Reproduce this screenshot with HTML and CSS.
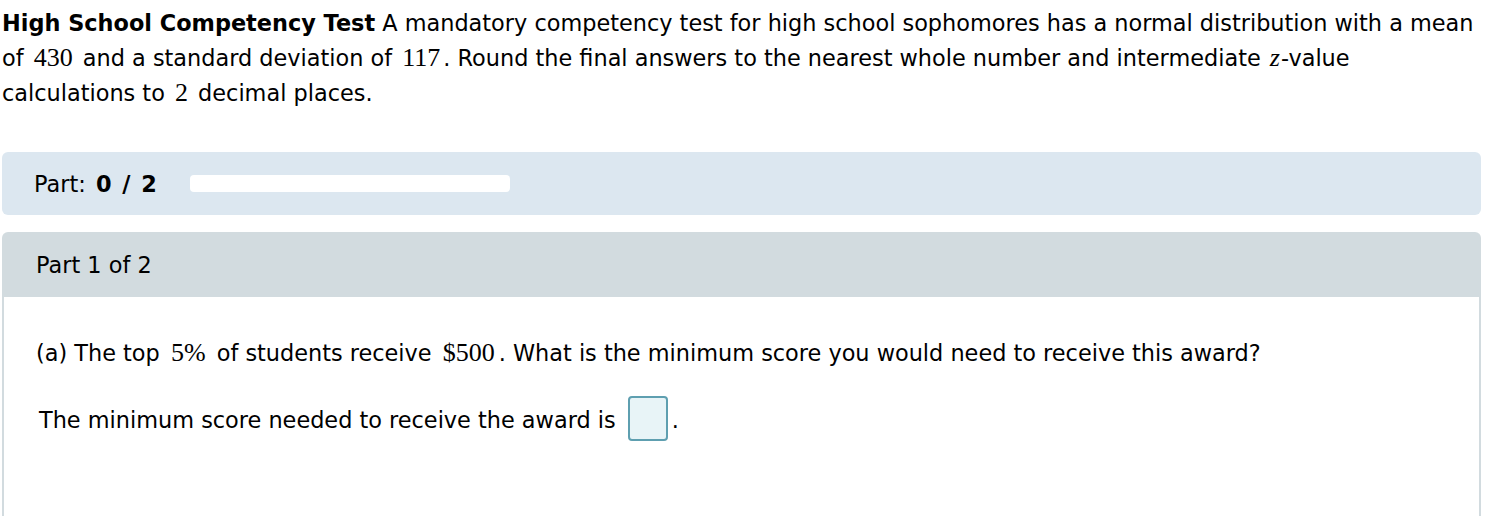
FILE: index.html
```html
<!DOCTYPE html>
<html lang="en">
<head>
    <meta charset="UTF-8">
    <meta name="viewport" content="width=device-width, initial-scale=1.0">
    <title>High School Competency Test</title>
    <link rel="stylesheet" href="styles.css">
</head>
<body>
    <div class="container">
        <p class="intro">
            <b>High School Competency Test</b> A mandatory competency test for high school sophomores has a normal distribution with a mean of <span class="math">430</span> and a standard deviation of <span class="math">117</span>. Round the final answers to the nearest whole number and intermediate <span class="math tight"><i>z</i></span>-value calculations to <span class="math">2</span> decimal places.
        </p>

        <div class="progress-panel">
            <span class="progress-label">Part: <b>0 / 2</b></span>
            <div class="progress-bar"></div>
        </div>

        <div class="part-panel">
            <div class="part-header">Part 1 of 2</div>
            <div class="part-body">
                <p class="question">(a) The top <span class="math">5%</span> of students receive <span class="math">$500</span>. What is the minimum score you would need to receive this award?</p>
                <p class="answer">The minimum score needed to receive the award is <span class="answer-box"></span>.</p>
            </div>
        </div>
    </div>
</body>
</html>
```

FILE: styles.css
```css
body {
    font-family: "DejaVu Sans", Verdana, sans-serif;
    font-size: 22.4px;
    color: #000;
    margin: 0;
    background: #fff;
}

.container {
    width: 1479px;
    padding-left: 2px;
}

.intro {
    margin: 0;
    padding-top: 6px;
    line-height: 35px;
}

.math {
    font-family: "Liberation Serif", "Times New Roman", serif;
    font-size: 26px;
    line-height: 1;
    margin: 0 3px;
}

.math.tight {
    margin: 0 1px 0 2px;
}

.question .math {
    margin: 0 4px;
}

.progress-panel {
    margin-top: 41px;
    height: 63px;
    background: #dce7f0;
    border-radius: 6px;
    display: flex;
    align-items: center;
    padding-left: 32px;
}

.progress-label {
    width: 156px;
}

.progress-label b {
    margin-left: 3px;
    word-spacing: 3px;
}

.progress-bar {
    width: 320px;
    height: 17px;
    background: #fff;
    border-radius: 4px;
}

.part-panel {
    margin-top: 17px;
}

.part-header {
    height: 65px;
    background: #d2dbdf;
    border-radius: 6px 6px 0 0;
    display: flex;
    align-items: center;
    padding-left: 34px;
}

.part-body {
    border-left: 2px solid #d2dbdf;
    border-right: 2px solid #d2dbdf;
    height: 240px;
    padding-left: 32px;
}

.question {
    margin: 0;
    padding-top: 43px;
}

.answer {
    margin: 0;
    padding-top: 30px;
    padding-left: 3px;
}

.answer-box {
    display: inline-block;
    width: 36px;
    height: 41px;
    border: 2px solid #5e9fb0;
    border-radius: 4px;
    background: #e8f4f7;
    vertical-align: -13px;
    margin: 0 4px 0 5px;
}
```
